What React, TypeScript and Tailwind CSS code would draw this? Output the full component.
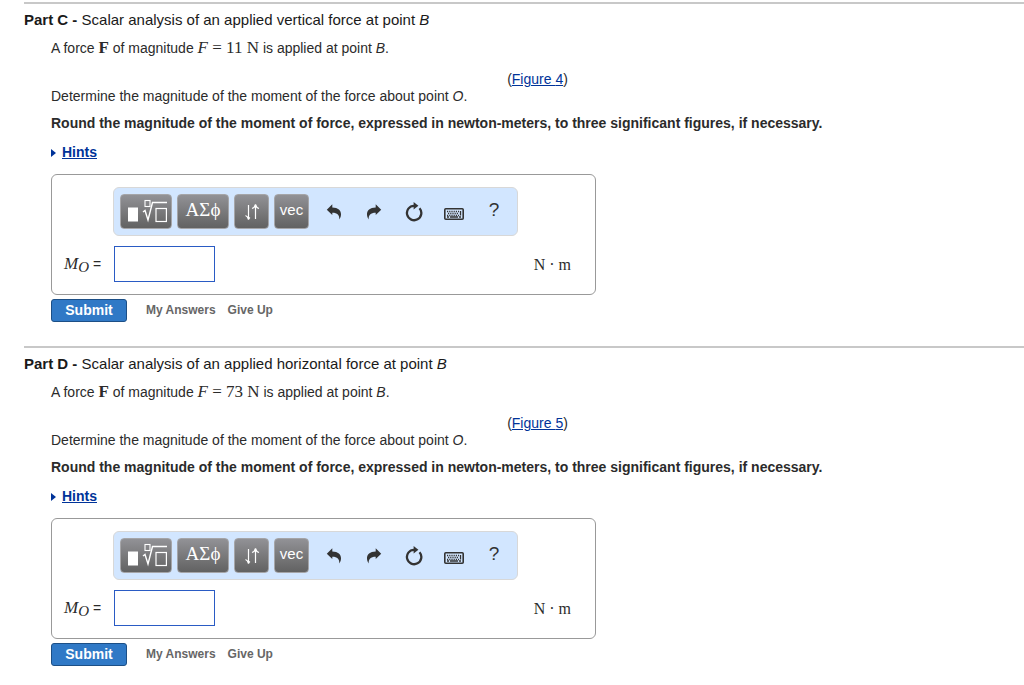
import type { ReactNode } from 'react';

type Part = {
  id: string;
  direction: string;
  magnitude: number;
  figure: number;
};

const parts: Part[] = [
  { id: 'C', direction: 'vertical', magnitude: 11, figure: 4 },
  { id: 'D', direction: 'horizontal', magnitude: 73, figure: 5 },
];

const Math = ({ children }: { children: ReactNode }) => (
  <span className="font-['Liberation_Serif',serif] text-[17px] leading-none">{children}</span>
);

const TemplateIcon = () => (
  <svg width="42" height="26" viewBox="0 0 42 26" fill="none" stroke="#fff" aria-hidden="true">
    <rect x="3" y="8.5" width="10" height="14" fill="#fff" stroke="none" />
    <rect x="20" y="1.5" width="5" height="6" strokeWidth="1.1" />
    <path d="M18 13l2-1.500 3 9.500L27.500 3.500H42" strokeWidth="1.4" />
    <rect x="31" y="9.500" width="10.400" height="13" strokeWidth="1.2" />
  </svg>
);

const ArrowsIcon = () => (
  <svg width="16" height="20" viewBox="0 0 16 20" fill="none" stroke="#fff" strokeWidth="1.2" aria-hidden="true">
    <path d="M4.5 3v14M1.500 13.500c1.500.5 2.500 2 3 4V3M4.500 17.500c.3-1 .8-1.500 1.500-2" />
    <path d="M11.500 17V3M8 6.500c1.800-.5 3-2 3.500-4 .5 2 1.700 3.500 3.500 4" />
  </svg>
);

const UndoIcon = () => (
  <svg width="16" height="18" viewBox="0 0 16 18" fill="#333" aria-hidden="true">
    <path d="M.8 6.700 6.300 1.200v3.200C12 4.400 15.200 7.500 15 11.500c-.1 2-.7 3.500-1.700 5 .3-4.300-1.800-6.700-7-6.700V12z" />
  </svg>
);

const RedoIcon = () => (
  <svg width="16" height="18" viewBox="0 0 16 18" fill="#333" aria-hidden="true">
    <path d="M15.200 6.700 9.700 1.200v3.200C4 4.400.8 7.500 1 11.500c.1 2 .7 3.500 1.700 5-.3-4.300 1.800-6.700 7-6.700V12z" />
  </svg>
);

const ResetIcon = () => (
  <svg width="20" height="20" viewBox="0 0 20 20" fill="none" aria-hidden="true">
    <path d="M15.500 6.200A7.200 7.200 0 1 1 10 3.800" stroke="#333" strokeWidth="2.300" />
    <path d="M9.600 0l4.800 3.800-4.800 3.700z" fill="#333" />
  </svg>
);

const KeyboardIcon = () => (
  <svg width="20" height="12" viewBox="0 0 20 12" fill="none" stroke="#333" aria-hidden="true">
    <rect x=".8" y=".8" width="18.400" height="10.400" rx="1" strokeWidth="1.600" />
    <path d="M3 3.500h12M4 5.500h11M3 7.500h12" strokeDasharray="1.200 1" strokeWidth="1.300" />
    <path d="M3 9h2M6 9h8M15 9h2M16.500 3v4.500" strokeWidth="1.300" />
  </svg>
);

const darkButton =
  'flex h-[35px] items-center justify-center rounded border border-[#a5a5a8] bg-linear-to-b from-[#929296] to-[#626262] text-white';

const toolButton = 'flex h-[35px] w-10 items-center justify-center';

const Toolbar = () => (
  <div className="flex h-[49px] w-[405px] items-center rounded-md border border-[#d8d8d8] bg-[#d2e6ff] pl-1.5">
    <div className="flex gap-[5px] pr-[5px]">
      <button type="button" aria-label="Templates" className={`${darkButton} w-[52px]`}>
        <TemplateIcon />
      </button>
      <button type="button" className={`${darkButton} w-[52px] pb-1 font-['Liberation_Serif',serif] text-[19px]`}>
        ΑΣϕ
      </button>
      <button type="button" aria-label="Subscript and superscript" className={`${darkButton} w-[35px]`}>
        <ArrowsIcon />
      </button>
      <button type="button" className={`${darkButton} w-[35px] pb-1 text-[15px]`}>
        vec
      </button>
    </div>
    <button type="button" aria-label="Undo" className={toolButton}>
      <UndoIcon />
    </button>
    <button type="button" aria-label="Redo" className={toolButton}>
      <RedoIcon />
    </button>
    <button type="button" aria-label="Reset" className={toolButton}>
      <ResetIcon />
    </button>
    <button type="button" aria-label="Keyboard" className={`${toolButton} pt-1`}>
      <KeyboardIcon />
    </button>
    <button type="button" className={`${toolButton} pb-1 text-[19px] text-[#333]`}>
      ?
    </button>
  </div>
);

const PartSection = ({ part }: { part: Part }) => {
  const inputId = `answer-${part.id}`;

  return (
    <section className="ml-6 border-t-2 border-[#c8c8c8] pt-1.5 pb-6">
      <h2 className="text-[15px] leading-5 text-[#1a1a1a]">
        <b>Part {part.id} -</b> Scalar analysis of an applied {part.direction} force at point <i>B</i>
      </h2>
      <div className="pl-[27px] text-[14px] leading-[17px] text-[#2b2b2b]">
        <p className="mt-[9px]">
          A force <Math><b>F</b></Math> of magnitude{' '}
          <Math>
            <i>F</i> = {part.magnitude} N
          </Math>{' '}
          is applied at point <i>B</i>.
        </p>
        <p className="mt-3.5 text-center">
          (<a href={`#figure-${part.figure}`} className="text-[#003399] underline">Figure {part.figure}</a>)
        </p>
        <p>
          Determine the magnitude of the moment of the force about point <i>O</i>.
        </p>
        <p className="mt-2.5 font-bold">
          Round the magnitude of the moment of force, expressed in newton-meters, to three significant figures, if necessary.
        </p>
        <div className="mt-3 flex items-center gap-1.5 text-[#003399]">
          <svg width="5" height="8" viewBox="0 0 5 8" fill="currentColor" aria-hidden="true">
            <path d="M0 0l5 4-5 4z" />
          </svg>
          <a href={`#hints-${part.id}`} className="font-bold underline">Hints</a>
        </div>
        <form>
          <div className="mt-[13px] max-w-[545px] rounded-md border border-[#999] py-3 pr-6 pl-3">
            <div className="pl-[49px]">
              <Toolbar />
            </div>
            <div className="mt-2.5 flex items-center">
              <label htmlFor={inputId} className="w-[50px] whitespace-nowrap">
                <span className="font-['Liberation_Serif',serif] text-[17px] italic">
                  M<sub className="bottom-[-3px] text-[15px]">O</sub>
                </span>{' '}
                =
              </label>
              <input id={inputId} type="text" className="h-9 w-[101px] border border-[#2a5bc4] px-2 outline-none" />
              <span className="ml-auto font-['Liberation_Serif',serif] text-[16px]">N · m</span>
            </div>
          </div>
          <div className="mt-1 flex items-center text-[12px] font-bold text-[#666]">
            <button type="button" className="h-[23px] w-[76px] rounded-[3px] border border-[#1c4f86] bg-[#3079c6] text-[14px] text-white">
              Submit
            </button>
            <a href={`#answers-${part.id}`} className="ml-[19px]">My Answers</a>
            <a href={`#give-up-${part.id}`} className="ml-3">Give Up</a>
          </div>
        </form>
      </div>
    </section>
  );
};

const App = () => (
  <main className="bg-white pt-0.5 font-['Liberation_Sans',Arial,sans-serif]">
    {parts.map((part) => (
      <PartSection key={part.id} part={part} />
    ))}
  </main>
);

export default App;
